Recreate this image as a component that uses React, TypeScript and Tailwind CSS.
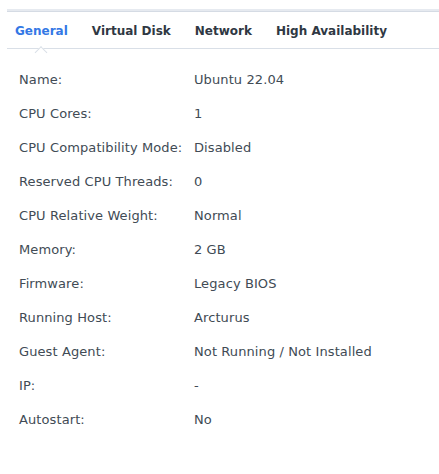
const tabs = ["General", "Virtual Disk", "Network", "High Availability"];

const rows: [string, string][] = [
  ["Name:", "Ubuntu 22.04"],
  ["CPU Cores:", "1"],
  ["CPU Compatibility Mode:", "Disabled"],
  ["Reserved CPU Threads:", "0"],
  ["CPU Relative Weight:", "Normal"],
  ["Memory:", "2 GB"],
  ["Firmware:", "Legacy BIOS"],
  ["Running Host:", "Arcturus"],
  ["Guest Agent:", "Not Running / Not Installed"],
  ["IP:", "-"],
  ["Autostart:", "No"],
];

export default function App() {
  return (
    <div className="h-[474px] w-[439px] overflow-hidden bg-white font-['DejaVu_Sans',sans-serif] text-[#414b55]">
      <div className="ml-[7px] mt-[9px] h-[3px] border-b border-[#d5dbe4] bg-[#e6eaf0]" />
      <div className="ml-[7px] flex h-[37px] items-center gap-[24px] border-b border-[#d9dfe7] pl-[8px] text-[12px]">
        {tabs.map((tab, i) => (
          <div
            key={tab}
            className={
              i === 0
                ? "relative pt-[1px] font-bold text-[#3478e5]"
                : "pt-[1px] font-bold text-[#2f3843]"
            }
          >
            {tab}
            {i === 0 && (
              <span className="absolute left-1/2 top-[27px] size-[9px] -translate-x-1/2 rotate-45 border-l border-t border-[#d9dfe7] bg-white" />
            )}
          </div>
        ))}
      </div>
      <div className="pl-[19px] pt-[14px] text-[13px] tracking-[0.1px]">
        {rows.map(([label, value]) => (
          <div key={label} className="flex h-[34px] items-center">
            <span className="w-[175px] shrink-0">{label}</span>
            <span>{value}</span>
          </div>
        ))}
      </div>
    </div>
  );
}
